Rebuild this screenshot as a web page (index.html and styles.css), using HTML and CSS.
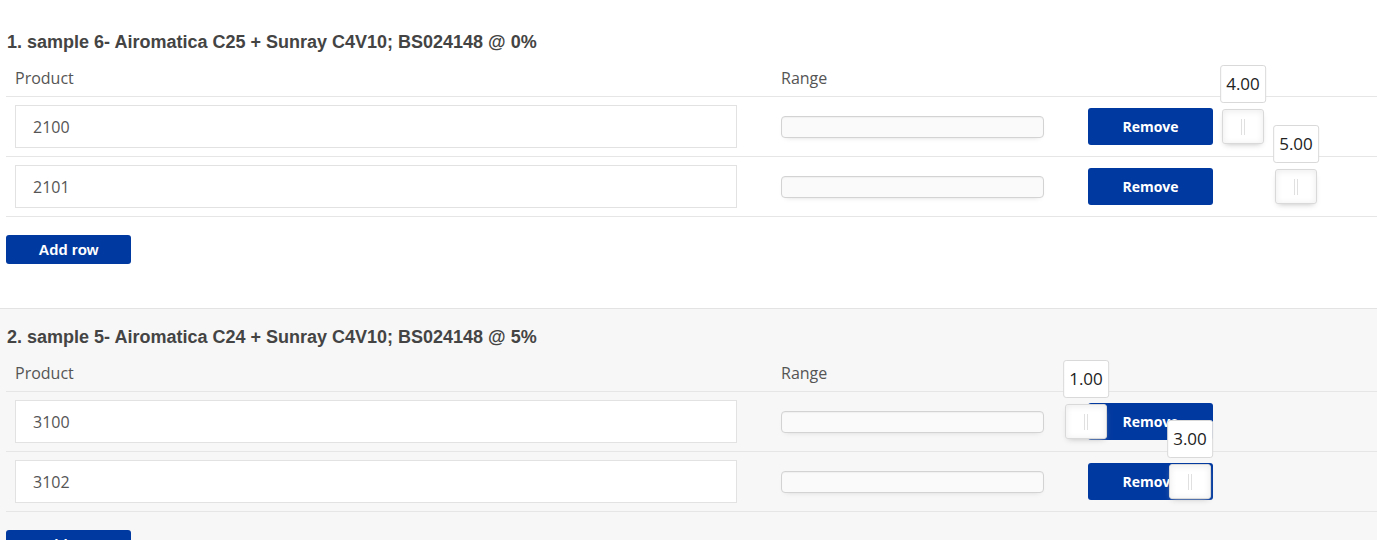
FILE: index.html
```html
<!DOCTYPE html>
<html lang="en">

<head>
    <meta charset="UTF-8">
    <meta name="viewport" content="width=device-width, initial-scale=1.0">
    <title>Samples</title>
    <link rel="stylesheet" href="styles.css">
</head>

<body>
    <section class="sample first">
        <h3 class="sample-title">1. sample 6- Airomatica C25 + Sunray C4V10; BS024148 @ 0%</h3>
        <div class="grid-row head">
            <div class="cell">Product</div>
            <div class="cell">Range</div>
            <div class="cell"></div>
        </div>
        <div class="grid-row">
            <div class="cell"><input type="text" class="product" value="2100"></div>
            <div class="cell range-cell">
                <div class="track">
                    <div class="handle" style="left: 440px;"><span class="tip">4.00</span></div>
                </div>
            </div>
            <div class="cell btn-cell"><button class="btn-remove">Remove</button></div>
        </div>
        <div class="grid-row">
            <div class="cell"><input type="text" class="product" value="2101"></div>
            <div class="cell range-cell">
                <div class="track">
                    <div class="handle" style="left: 493px;"><span class="tip">5.00</span></div>
                </div>
            </div>
            <div class="cell btn-cell"><button class="btn-remove">Remove</button></div>
        </div>
        <button class="btn-add">Add row</button>
    </section>

    <section class="sample alt">
        <h3 class="sample-title">2. sample 5- Airomatica C24 + Sunray C4V10; BS024148 @ 5%</h3>
        <div class="grid-row head">
            <div class="cell">Product</div>
            <div class="cell">Range</div>
            <div class="cell"></div>
        </div>
        <div class="grid-row">
            <div class="cell"><input type="text" class="product" value="3100"></div>
            <div class="cell range-cell">
                <div class="track">
                    <div class="handle" style="left: 283px;"><span class="tip">1.00</span></div>
                </div>
            </div>
            <div class="cell btn-cell"><button class="btn-remove">Remove</button></div>
        </div>
        <div class="grid-row">
            <div class="cell"><input type="text" class="product" value="3102"></div>
            <div class="cell range-cell">
                <div class="track">
                    <div class="handle" style="left: 387px;"><span class="tip">3.00</span></div>
                </div>
            </div>
            <div class="cell btn-cell"><button class="btn-remove">Remove</button></div>
        </div>
        <button class="btn-add">Add row</button>
    </section>
</body>

</html>
```

FILE: styles.css
```css
body {
    margin: 0;
    font-family: "Open Sans", "Liberation Sans", sans-serif;
    color: #555;
    background-color: #ffffff;
}

.sample {
    padding: 18px 0 44px 6px;
}

.sample.first {
    padding-top: 32px;
}

.sample.alt {
    background-color: #f7f7f7;
    border-top: 1px solid #e3e3e3;
}

.sample-title {
    margin: 0 0 8px 1px;
    font-family: "Liberation Sans", Arial, sans-serif;
    font-size: 18px;
    line-height: 20px;
    font-weight: bold;
    color: #444;
}

.grid-row {
    display: grid;
    grid-template-columns: 767px 307px 1fr;
    border-bottom: 1px solid #e6e6e6;
}

.cell {
    padding: 8px;
    font-size: 16px;
    line-height: 20px;
}

.grid-row .cell:first-child {
    padding-left: 9px;
}

.product {
    box-sizing: border-box;
    width: 722px;
    height: 43px;
    padding: 0 17px;
    border: 1px solid #e2e2e2;
    background-color: #ffffff;
    font-family: "Open Sans", sans-serif;
    font-size: 16px;
    color: #555;
    outline: none;
}

.range-cell {
    display: flex;
    align-items: center;
}

.track {
    position: relative;
    box-sizing: border-box;
    width: 263px;
    height: 22px;
    background-color: #fafafa;
    border: 1px solid #d3d3d3;
    border-radius: 4px;
    box-shadow: inset 0 1px 1px #f0f0f0, 0 3px 6px -5px #bbb;
}

.handle {
    position: absolute;
    top: -8px;
    box-sizing: border-box;
    width: 42px;
    height: 35px;
    background-color: #ffffff;
    border: 1px solid #d9d9d9;
    border-radius: 3px;
    box-shadow: inset 0 0 1px #fff, inset 0 1px 7px #ebebeb, 0 3px 6px -3px #bbb;
}

.handle::before,
.handle::after {
    content: "";
    position: absolute;
    top: 9px;
    width: 1px;
    height: 16px;
    background-color: #e0e0e0;
}

.handle::before {
    left: 18px;
}

.handle::after {
    left: 21px;
}

.tip {
    position: absolute;
    bottom: calc(100% + 7px);
    left: 50%;
    transform: translateX(-50%);
    padding: 5px;
    border: 1px solid #d9d9d9;
    border-radius: 3px;
    background-color: #ffffff;
    color: #222;
    font-size: 17px;
    line-height: 26px;
    white-space: nowrap;
}

.btn-cell {
    display: flex;
    align-items: center;
}

.btn-remove {
    width: 125px;
    height: 37px;
    background-color: #0039a0;
    color: #ffffff;
    border: none;
    border-radius: 3px;
    font-family: "Open Sans", sans-serif;
    font-size: 14px;
    font-weight: bold;
    cursor: pointer;
}

.btn-add {
    display: block;
    margin-top: 18px;
    width: 125px;
    height: 29px;
    background-color: #0039a0;
    color: #ffffff;
    border: none;
    border-radius: 3px;
    font-family: "Liberation Sans", Arial, sans-serif;
    font-size: 15px;
    font-weight: bold;
    cursor: pointer;
}
```
